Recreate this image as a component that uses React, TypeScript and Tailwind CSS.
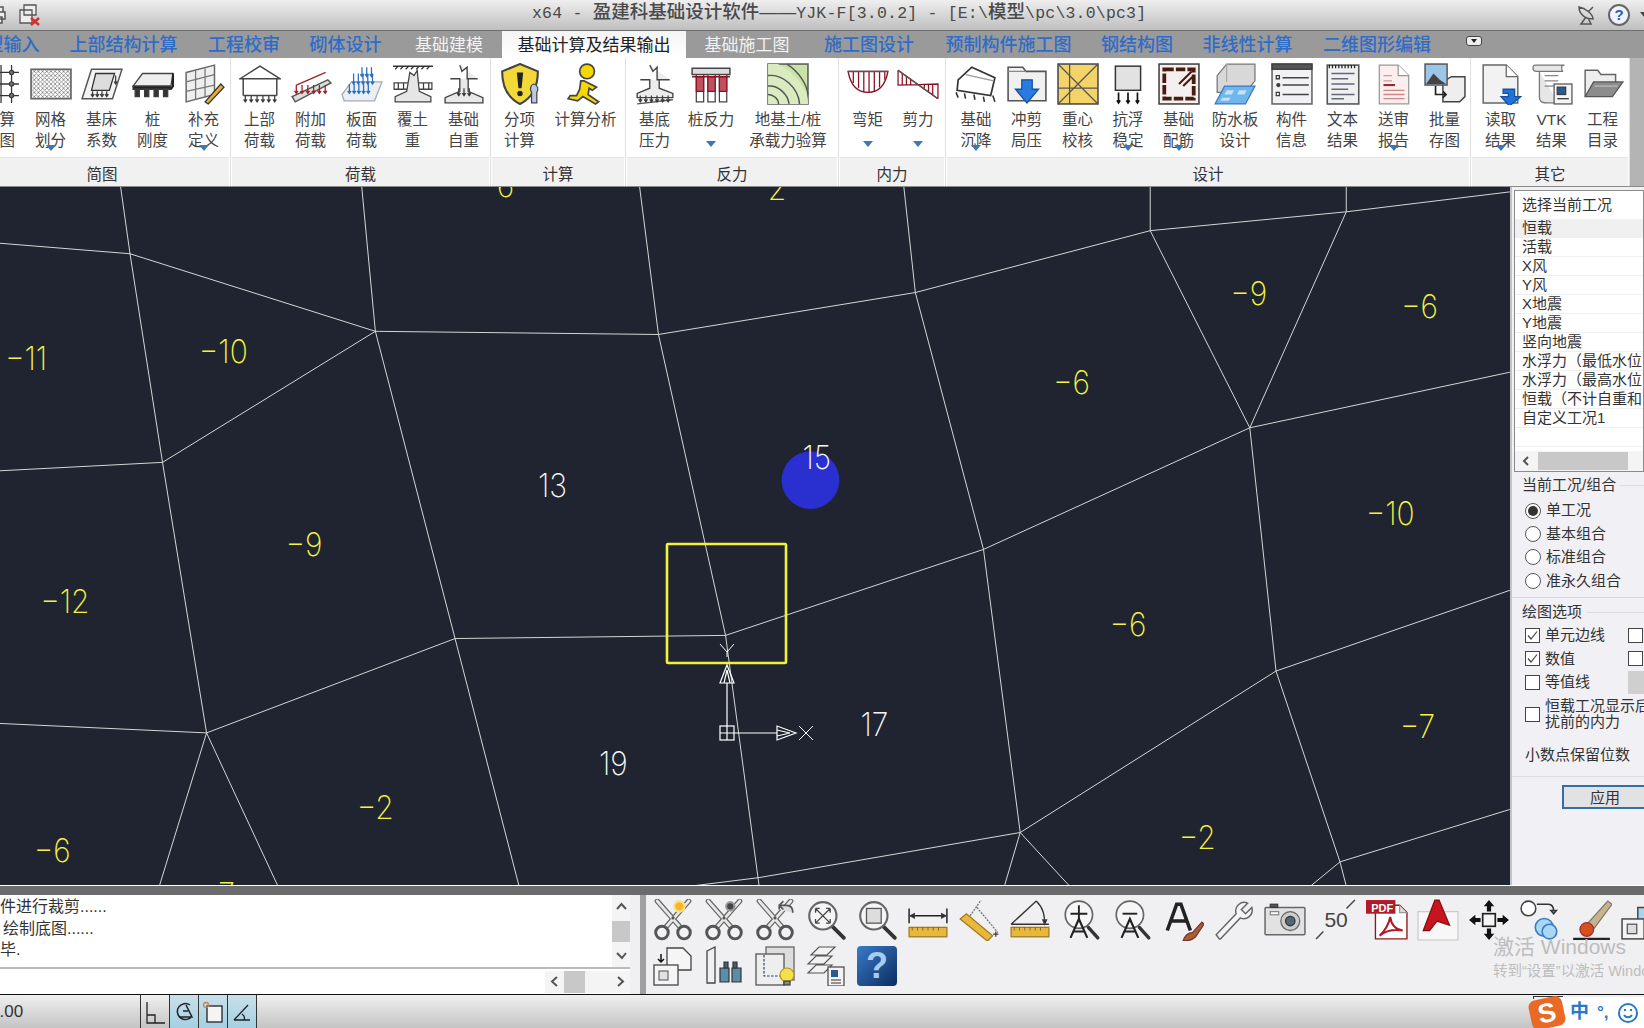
import type { ReactNode } from 'react';

const K = '#3c3c3c';

// small svg wrapper, all icons are drawn on a 40x40 grid
function Ic({ children, size = 42 }: { children: ReactNode; size?: number }) {
  return (
    <svg width={size} height={size} viewBox="0 0 40 40" fill="none" stroke={K} strokeWidth="1.2" className="shrink-0">
      {children}
    </svg>
  );
}

const Arrows = ({ x, y, n, gap = 6, h = 7 }: { x: number; y: number; n: number; gap?: number; h?: number }) => (
  <>
    {Array.from({ length: n }).map((_, i) => (
      <path key={i} d={`M${x + i * gap} ${y}v${h}m-1.6-2.4l1.6 2.4 1.6-2.4`} />
    ))}
  </>
);

const Scissors = ({ extra }: { extra?: ReactNode }) => (
  <>
    <path d="M5 2L27 27M35 2L13 27" stroke="#666" strokeWidth="5" strokeLinecap="round" />
    <path d="M5 2L27 27M35 2L13 27" stroke="#e8e8e8" strokeWidth="2.8" strokeLinecap="round" />
    <circle cx="9.500" cy="32" r="6" fill="#f2f2f2" stroke="#555" strokeWidth="2.800" />
    <circle cx="30.500" cy="32" r="6" fill="#f2f2f2" stroke="#555" strokeWidth="2.800" />
    <circle cx="20" cy="18" r="1.500" fill="#555" stroke="none" />
    {extra}
  </>
);

const Magnifier = ({ children }: { children?: ReactNode }) => (
  <>
    <path d="M26 26L37 37" stroke="#333" strokeWidth="3.6" strokeLinecap="round" />
    <circle cx="17" cy="16" r="13" fill="#f5f5f5" stroke="#666" strokeWidth="2" />
    {children}
  </>
);

const Ruler = ({ x = 2, y = 27, w = 36 }: { x?: number; y?: number; w?: number }) => (
  <>
    <rect x={x} y={y} width={w} height="9" fill="#e8b83c" stroke="#a07a20" />
    <path d={`M${x + 3} ${y}v3m5-3v3m5-3v3m5-3v3m5-3v3m5-3v3`} stroke="#7a5a10" strokeWidth=".8" />
  </>
);

const TextZoom = ({ minus }: { minus?: boolean }) => (
  <>
    <path d="M27 27L36 37" stroke="#333" strokeWidth="3.2" strokeLinecap="round" />
    <circle cx="18" cy="15" r="13" fill="#f6f6f6" stroke="#666" strokeWidth="1.6" />
    <path d={minus ? 'M11 14h14' : 'M10 14h16M18 6v14'} stroke="#222" strokeWidth="1.8" />
    <path d="M10 37L18 19l8 18M13 31h10" stroke="#222" strokeWidth="2" />
  </>
);

const ribbonIcons: Record<string, ReactNode> = {
  grid: (
    <>
      <path d="M0 9H38M0 20H38M0 31H38M21 2V38M31 2V38" stroke="#333" />
      <circle cx="31" cy="9" r="2" fill="#777" />
      <circle cx="31" cy="20" r="2" fill="#777" />
      <circle cx="31" cy="31" r="2" fill="#777" />
    </>
  ),
  mesh: (
    <>
      <defs>
        <pattern id="msh" width="4" height="4" patternUnits="userSpaceOnUse">
          <path d="M0 0L4 4M4 0L0 4" stroke="#777" strokeWidth=".7" />
        </pattern>
      </defs>
      <rect x="1" y="6" width="38" height="28" fill="url(#msh)" stroke="#666" strokeWidth="1.6" />
    </>
  ),
  bed: (
    <>
      <path d="M10 6H39L30 34H1Z" fill="#f4f4f4" stroke="#555" strokeWidth="1.4" />
      <path d="M14 10H32L27 26H10Z" fill="#ddd" stroke="#333" />
      <Arrows x={11} y={27} n={4} gap={4.5} h={5} />
      <path d="M33 12v8m-1.4-2.4l1.4 2.4 1.4-2.4" />
    </>
  ),
  pile: (
    <>
      <path d="M1 22L10 10H39L37 22Z" fill="#eee" stroke="#444" />
      <path d="M1 22H37V25H1Z" fill="#222" />
      <path d="M3 25h4v7H3zM12 25h4v7h-4zM21 25h4v7h-4zM30 25h4v7h-4z" fill="#333" />
      <path d="M39 10v12l-2 3" stroke="#222" strokeWidth="2" />
    </>
  ),
  extra: (
    <>
      <path d="M3 9L30 2V30L3 37Z" fill="#eee" stroke="#666" strokeWidth="1.4" />
      <path d="M12 7V35M21 5V33M3 18L30 11M3 27L30 21" stroke="#777" />
      <path d="M21 37L36 20L39 23L24 39Z" fill="#e8b030" stroke="#333" />
    </>
  ),
  upper: (
    <>
      <path d="M1 15L20 3L39 15H1Z" fill="#fff" stroke="#444" strokeWidth="1.4" />
      <path d="M4 15V31M36 15V31M4 31H36" stroke="#444" strokeWidth="1.4" />
      <Arrows x={6} y={31} n={6} gap={5.6} h={6} />
    </>
  ),
  addl: (
    <>
      <path d="M2 32L36 16L39 19L5 37Z" fill="#ddd" stroke="#555" strokeWidth="1.4" />
      <g stroke="#a02020">
        <Arrows x={6} y={21} n={6} gap={5.5} h={8} />
      </g>
      <path d="M6 21L34 9" stroke="#a02020" />
    </>
  ),
  slab: (
    <>
      <path d="M1 30L10 18H39L32 36H3Z" fill="#e9eff4" stroke="#aaa" />
      <g stroke="#2a6fc0">
        <Arrows x={8} y={20} n={5} gap={4.5} h={9} />
        <Arrows x={12} y={10} n={5} gap={4.5} h={10} />
        <Arrows x={20} y={4} n={3} gap={4.5} h={9} />
      </g>
    </>
  ),
  cover: (
    <>
      <path d="M1 3H39" stroke="#333" strokeWidth="1.4" />
      <path d="M3 6l3-3M8 6l3-3M13 6l3-3M18 6l3-3M23 6l3-3M28 6l3-3M33 6l3-3" stroke="#333" />
      <path d="M2 19H38V25H2Z" fill="#fff" stroke="#444" />
      <path d="M6 19v6M11 19v6M30 19v6M35 19v6" />
      <path d="M3 37V32L14 27L17 9L21 12L24 7L26 27L37 32V37Z" fill="#e6e6e6" stroke="#444" />
    </>
  ),
  self: (
    <>
      <path d="M16 2L18 8L23 4V15L33 15M7 15H16V27L2 33V38H38V33L24 27V15" fill="#e9e9e9" stroke="#444" strokeWidth="1.3" />
      <Arrows x={15} y={24} n={3} gap={5} h={7} />
    </>
  ),
  item: (
    <>
      <path d="M20 1L37 8C37 23 32 33 20 39C8 33 3 23 3 8Z" fill="#f3d83a" stroke="#444" strokeWidth="2" />
      <path d="M17 9h6l-1.5 15h-3z" fill="#222" stroke="none" />
      <circle cx="20" cy="29" r="2.6" fill="#222" stroke="none" />
      <path d="M33 20c4 1 5 5 3 8v10h-5V28c-2-3-1-7 2-8z" fill="#b9cbe0" stroke="#445" />
    </>
  ),
  run: (
    <>
      <circle cx="21" cy="8" r="7" fill="#f5d800" stroke="#444" strokeWidth="1.6" />
      <path d="M18 17L30 23L26 26L23 24L22 30L32 37L29 39L17 32L12 36L3 34L5 31L11 31L14 25L15 17Z" fill="#f5d800" stroke="#444" strokeWidth="1.6" />
    </>
  ),
  base: (
    <>
      <path d="M15 2L18 8L22 4V16H34M6 16H15V24L3 29V33H37V29L24 24V16" fill="#ececec" stroke="#444" strokeWidth="1.3" />
      <path d="M3 39L37 35" stroke="#555" />
      <Arrows x={6} y={31} n={6} gap={5.3} h={6} />
    </>
  ),
  pileForce: (
    <>
      <rect x="2" y="5" width="36" height="6" fill="#ddd" stroke="#444" strokeWidth="1.4" />
      <path d="M6 11h7v26H6zM17 11h7v26h-7zM28 11h7v26h-7z" fill="#fff" stroke="#444" />
      <path d="M6 13h7v14H6zM17 13h7v14h-7zM28 13h7v14h-7z" fill="#c05060" stroke="#901020" />
      <path d="M2 13H38" stroke="#901020" strokeWidth="1.4" />
    </>
  ),
  soil: (
    <>
      <rect x="1" y="1" width="38" height="38" fill="#c8e2a8" stroke="#666" strokeWidth="1.6" />
      <path d="M1 39H39V36C38 22 22 6 10 1H1Z" fill="#d8ecc0" stroke="none" />
      <path d="M1 12C15 10 30 24 31 39M1 22C11 21 20 30 21 39M1 30C6 30 11 34 11 39M19 1C30 8 38 20 39 30" stroke="#555" strokeWidth="1.4" />
    </>
  ),
  moment: (
    <>
      <path d="M1 8H39C36 24 28 28 20 28C12 28 4 24 1 8Z" fill="#fff" stroke="#8a1020" strokeWidth="1.3" />
      <path d="M6 8V19M11 8V24M16 8V27M21 8V28M26 8V27M31 8V23M36 8V16" stroke="#8a1020" />
      <path d="M1 8H39" stroke="#555" strokeWidth="1.4" />
    </>
  ),
  shear: (
    <>
      <path d="M1 7L39 34M1 7V21L20 20.5L39 20V34" fill="none" stroke="#8a1020" strokeWidth="1.2" />
      <path d="M5 10V21M9 13V21M13 16V21M26 20V25M30 20V28M34 20V31" stroke="#8a1020" />
      <path d="M1 7L39 34" stroke="#555" strokeWidth="1.3" />
    </>
  ),
  settle: (
    <>
      <path d="M3 16L16 4L38 14L34 31L2 26Z" fill="#fff" stroke="#333" strokeWidth="1.6" />
      <path d="M10 11L37 17" stroke="#999" strokeWidth="1.3" />
      <path d="M1 28L3 33M9 29L10 34M18 30L19 35M27 32L28 37M36 31L38 37" stroke="#333" strokeWidth="1.5" />
    </>
  ),
  punch: (
    <>
      <path d="M2 4H16L19 8H38V36H2Z" fill="#f0f0f0" stroke="#555" strokeWidth="1.5" />
      <path d="M2 8H19" stroke="#888" />
      <path d="M15 16H25V25H31L20 38L9 25H15Z" fill="#2a7ae0" stroke="#1550a0" />
    </>
  ),
  gravity: (
    <>
      <rect x="1" y="1" width="38" height="38" fill="#f4d468" stroke="#555" strokeWidth="1.6" />
      <path d="M1 1L39 39M39 1L1 39M12 1V39M1 24H39" stroke="#555" strokeWidth="1.2" />
    </>
  ),
  buoy: (
    <>
      <rect x="8" y="3" width="24" height="23" fill="#e2e2e2" stroke="#333" strokeWidth="1.4" />
      <g stroke="#111" strokeWidth="1.6">
        <Arrows x={11} y={28} n={3} gap={9} h={10} />
      </g>
    </>
  ),
  rebar: (
    <>
      <rect x="1" y="1" width="38" height="38" fill="#f4f0f0" stroke="#444" strokeWidth="1.5" />
      <path d="M6 6H34V34H6Z" stroke="#4a1c10" strokeWidth="3.600" strokeDasharray="9 2" />
      <path d="M20 20L32 8M24 22L33 13" stroke="#4a1c10" strokeWidth="2" />
    </>
  ),
  waterproof: (
    <>
      <path d="M3 28V12L12 1H39V17L30 28Z" fill="#d8d8d8" stroke="#777" />
      <path d="M12 1V18" stroke="#aaa" />
      <path d="M1 39L10 22H39L30 39Z" fill="#6fb6ec" stroke="#3a7ac0" />
      <path d="M10 30h7l2-4h-7zM22 30h7l2-4h-7zM6 36h8l2-3H8z" fill="#c4e2f8" stroke="none" />
    </>
  ),
  info: (
    <>
      <rect x="1" y="1" width="38" height="38" fill="#f2f2f4" stroke="#666" strokeWidth="1.5" />
      <rect x="1" y="1" width="38" height="5" fill="#555" />
      <path d="M5 12h3v3H5zM5 28h3v3H5z" fill="#fff" />
      <path d="M11 14H36M11 21H36M11 30H36" stroke="#444" strokeWidth="1.4" />
      <circle cx="7" cy="21" r="1.4" fill="#333" />
    </>
  ),
  text: (
    <>
      <rect x="5" y="2" width="30" height="37" fill="#eef0f2" stroke="#555" strokeWidth="1.5" />
      <path d="M7 2V5M10 2V5M13 2V5M16 2V5M19 2V5M22 2V5M25 2V5M28 2V5M31 2V5" stroke="#222" strokeWidth="1.2" />
      <path d="M9 10H31M9 15H25M9 20H31M9 25H25M9 30H31M9 34H21" stroke="#667" strokeWidth="1.3" />
    </>
  ),
  report: (
    <>
      <path d="M6 2H24L34 12V39H6Z" fill="#fbeeee" stroke="#999" />
      <path d="M24 2V12H34" fill="#fff" stroke="#999" />
      <path d="M10 12H18M10 17H18" stroke="#c99" />
      <path d="M10 21H21" stroke="#8a3030" strokeWidth="2" />
      <path d="M10 26H30M10 30H30M10 34H30" stroke="#c88" />
    </>
  ),
  batch: (
    <>
      <path d="M18 18L26 13H39V32L34 37H18Z" fill="#eee" stroke="#444" strokeWidth="1.4" />
      <rect x="1" y="1" width="21" height="20" fill="#9cc6e6" stroke="#555" strokeWidth="1.4" />
      <path d="M2 20L9 10L15 16L21 20Z" fill="#444" stroke="none" />
      <path d="M11 22V30H21m-3-3l3 3-3 3" stroke="#222" strokeWidth="1.6" />
    </>
  ),
  read: (
    <>
      <path d="M3 2H25L36 13V38H3Z" fill="#f2f2f2" stroke="#666" strokeWidth="1.4" />
      <path d="M25 2V13H36" fill="#fff" stroke="#666" />
      <path d="M22 25H33V32H39L28 41L20 32H27V29H22Z" fill="#1f72d8" stroke="#1550a0" />
    </>
  ),
  vtk: (
    <>
      <path d="M4 2C1 2 1 8 5 8H30C28 2 30 2 32 2ZM8 8V32C8 38 12 38 16 38H26" fill="#e6e6e6" stroke="#777" />
      <path d="M13 12H26M13 17H26M13 22H22" stroke="#888" />
      <rect x="22" y="20" width="17" height="19" fill="#f5f5f5" stroke="#555" />
      <rect x="25" y="23" width="8" height="7" fill="#2a5a90" />
      <path d="M25 34H36" stroke="#333" />
    </>
  ),
  folder: (
    <>
      <path d="M3 32V7H15L18 11H32V18" fill="#eee" stroke="#666" strokeWidth="1.4" />
      <path d="M3 32L11 18H39L29 32Z" fill="#8c8c8c" stroke="#555" />
      <path d="M12 22H34" stroke="#bbb" />
    </>
  ),
};

const toolIcons: ReactNode[] = [
  <Scissors extra={<circle cx="26" cy="7" r="5" fill="#f8b820" stroke="#fbe090" strokeWidth="2" />} />,
  <Scissors extra={<circle cx="26" cy="7" r="4" fill="#444" stroke="#999" strokeWidth="2" />} />,
  <Scissors extra={<path d="M24 10V6H31C35 6 37 9 37 13M24 6L28 2M24 6L28 10" stroke="#555" strokeWidth="1.6" fill="#ddd" />} />,
  <Magnifier>
    <path d="M10 9L24 23M24 9L10 23M10 9h4M10 9v4M24 9h-4M24 9v4M10 23h4M10 23v-4M24 23h-4M24 23v-4" stroke="#444" />
  </Magnifier>,
  <Magnifier>
    <rect x="10" y="9" width="14" height="14" fill="#ddd" stroke="#555" />
  </Magnifier>,
  <>
    <path d="M2 9V23M38 9V23M3 16H37" stroke="#222" strokeWidth="1.4" />
    <path d="M3 16l4-2v4zM37 16l-4-2v4z" fill="#222" />
    <Ruler />
  </>,
  <>
    <path d="M8 21L22 1M18 8L38 32" stroke="#777" strokeDasharray="2 1" />
    <path d="M2 19L8 14L33 35L28 40Z" fill="#e8b83c" stroke="#a07a20" />
    <path d="M36 31v5m-2.500-2.500h5" />
  </>,
  <>
    <path d="M2 24L26 2M2 24H38M26 2C33 9 34 16 34 24" stroke="#333" strokeWidth="1.3" />
    <path d="M34 24l-1.800-4h3.600z" fill="#222" />
    <Ruler y={27} />
  </>,
  <TextZoom />,
  <TextZoom minus />,
  <>
    <path d="M5 30L14 5H18L27 30M9 21H23" stroke="#222" strokeWidth="3.400" />
    <path d="M20 40C22 34 26 32 29 32L38 22L40 24L32 36C28 40 24 40 20 40Z" fill="#a86030" stroke="#733" />
  </>,
  <path d="M6 38L3 34L22 14C20 7 27 1 33 4L27 10L31 14L37 8C39 15 32 21 26 18L7 38Z" fill="#f4f4f4" stroke="#666" strokeWidth="1.4" />,
  <>
    <rect x="1" y="8" width="38" height="26" rx="1" fill="#e2e2e2" stroke="#666" strokeWidth="1.4" />
    <rect x="6" y="5" width="7" height="3" fill="#555" />
    <circle cx="25" cy="21" r="9" fill="#ccc" stroke="#666" />
    <circle cx="25" cy="21" r="4.500" fill="#567" stroke="#333" />
    <rect x="6" y="12" width="8" height="3" fill="#fff" stroke="#888" />
  </>,
  <>
    <path d="M1 38L8 31M30 9L38 1" stroke="#444" strokeWidth="1.4" />
    <text x="9" y="27" fontSize="20" fontFamily="Liberation Sans, sans-serif" fill="#444" stroke="none">50</text>
  </>,
  <>
    <path d="M9 6H32L39 13V38H9Z" fill="#fff" stroke="#8a1a1a" strokeWidth="1.3" />
    <path d="M32 6V13H39" fill="#ddd" stroke="#999" />
    <rect x="0" y="1" width="28" height="13" fill="#b01a2a" stroke="none" />
    <text x="5" y="12" fontSize="10.500" fontWeight="700" fontFamily="Liberation Sans, sans-serif" fill="#fff" stroke="none">PDF</text>
    <path d="M13 35C18 30 22 24 23 17C24 24 28 29 35 30C28 29 19 30 13 35Z" stroke="#b01a2a" strokeWidth="2" />
  </>,
  <>
    <rect x="1" y="12" width="38" height="27" fill="#f7f7f7" stroke="#ccc" />
    <path d="M6 30L17 1H21L31 25L19 21L12 30Z" fill="#c8141c" stroke="#8a0c10" />
  </>,
  <>
    <rect x="14" y="14" width="12" height="12" fill="#f4f4f4" stroke="#222" strokeWidth="1.600" />
    <path d="M20 1L25 7H22V12H18V7H15ZM20 39L25 33H22V28H18V33H15ZM1 20L7 15V18H12V22H7V25ZM39 20L33 15V18H28V22H33V25Z" fill="#111" stroke="none" />
  </>,
  <>
    <circle cx="9" cy="9" r="7" fill="#fff" stroke="#444" strokeWidth="1.500" />
    <path d="M17 5H28C32 5 33 8 33 12M33 14l-2.500-3h5z" stroke="#333" strokeWidth="1.500" />
    <circle cx="24" cy="27" r="8.500" fill="#a8d8f4" stroke="#3a7ac0" strokeWidth="1.500" />
    <circle cx="29" cy="31" r="7" fill="#a8d8f4" stroke="#3a7ac0" strokeWidth="1.500" />
  </>,
  <>
    <path d="M17 23L36 2L40 5L23 28Z" fill="#c8b488" stroke="#777" />
    <circle cx="16" cy="29" r="6.500" fill="#d8501c" stroke="#933" />
    <path d="M3 38H38" stroke="#222" strokeWidth="2" />
  </>,
  <>
    <path d="M16 8H27L33 14V24H16Z" fill="#a8d4f0" stroke="#444" strokeWidth="1.400" />
    <rect x="1" y="19" width="21" height="19" fill="#f4f4f4" stroke="#444" strokeWidth="1.400" />
    <rect x="6" y="24" width="9" height="9" fill="#ddd" stroke="#555" />
  </>,
];

const toolIcons2: ReactNode[] = [
  <>
    <path d="M14 2H30L38 10V24H14Z" fill="#f5f5f5" stroke="#444" strokeWidth="1.300" />
    <rect x="1" y="19" width="24" height="20" fill="#f5f5f5" stroke="#444" strokeWidth="1.300" />
    <rect x="6" y="25" width="9" height="9" fill="#e0e0e0" stroke="#666" />
    <path d="M8 8V16m-3-3l3 3 3-3" stroke="#111" strokeWidth="1.500" />
  </>,
  <>
    <path d="M3 5L11 1V37H3Z" fill="#f0f0f0" stroke="#444" strokeWidth="1.300" />
    <path d="M16 22h9v14h-9zM28 22h9v14h-9z" fill="#5a8ea8" stroke="#333" />
    <path d="M20 16h4v6h-4zM29 16h4v6h-4z" fill="#3a6478" stroke="#333" />
  </>,
  <>
    <rect x="11" y="1" width="28" height="33" fill="#ddd" stroke="#666" strokeWidth="1.300" />
    <rect x="1" y="8" width="28" height="31" fill="#eee" stroke="#555" strokeWidth="1.300" />
    <path d="M9 9V30H29" stroke="#24408a" strokeWidth="1.200" strokeDasharray="2.500 1.500" />
    <circle cx="32" cy="29" r="7" fill="#f5e04a" stroke="#b09820" />
    <rect x="29" y="35" width="6" height="4" fill="#888" />
  </>,
  <>
    <path d="M5 9L13 1H29L21 9ZM2 18L10 10H26L18 18ZM2 27L10 19H26L18 27Z" fill="#f2f2f2" stroke="#555" />
    <rect x="22" y="21" width="16" height="19" fill="#f2f2f2" stroke="#444" strokeWidth="1.200" />
    <rect x="25" y="24" width="7" height="7" fill="#2a5a90" stroke="none" />
    <path d="M25 34H35M25 37H35" stroke="#333" />
  </>,
  <>
    <defs>
      <linearGradient id="hlp" x1="0" y1="0" x2="1" y2="1">
        <stop offset="0" stopColor="#3a7ac8" />
        <stop offset="1" stopColor="#0c2c60" />
      </linearGradient>
    </defs>
    <rect x="0" y="0" width="40" height="40" rx="4" fill="url(#hlp)" stroke="none" />
    <text x="20" y="32" textAnchor="middle" fontSize="36" fontWeight="700" fontFamily="Liberation Sans, sans-serif" fill="#a8ccf0" stroke="none">?</text>
  </>,
];

const tabs = [
  { t: '模型输入', w: 101, c: 'b' },
  { t: '上部结构计算', w: 139, c: 'b' },
  { t: '工程校审', w: 102, c: 'b' },
  { t: '砌体设计', w: 101, c: 'b' },
  { t: '基础建模', w: 106, c: 'w' },
  { t: '基础计算及结果输出', w: 184, c: 'a' },
  { t: '基础施工图', w: 122, c: 'w' },
  { t: '施工图设计', w: 122, c: 'b' },
  { t: '预制构件施工图', w: 157, c: 'b' },
  { t: '钢结构图', w: 100, c: 'b' },
  { t: '非线性计算', w: 121, c: 'b' },
  { t: '二维图形编辑', w: 138, c: 'b' },
];

type Item = { l: [string, string]; i: string; w?: number; arrow?: boolean };
const groups: { label: string; w: number; pl: number; items: Item[] }[] = [
  {
    label: '简图', w: 231, pl: 0,
    items: [
      { l: ['计算', '简图'], i: 'grid' },
      { l: ['网格', '划分'], i: 'mesh', arrow: true },
      { l: ['基床', '系数'], i: 'bed' },
      { l: ['桩', '刚度'], i: 'pile' },
      { l: ['补充', '定义'], i: 'extra', arrow: true },
    ],
  },
  {
    label: '荷载', w: 260, pl: 3,
    items: [
      { l: ['上部', '荷载'], i: 'upper' },
      { l: ['附加', '荷载'], i: 'addl' },
      { l: ['板面', '荷载'], i: 'slab' },
      { l: ['覆土', '重'], i: 'cover' },
      { l: ['基础', '自重'], i: 'self' },
    ],
  },
  {
    label: '计算', w: 135, pl: 3,
    items: [
      { l: ['分项', '计算'], i: 'item' },
      { l: ['计算分析', ''], i: 'run', w: 81 },
    ],
  },
  {
    label: '反力', w: 213, pl: 3,
    items: [
      { l: ['基底', '压力'], i: 'base' },
      { l: ['桩反力', ''], i: 'pileForce', w: 62, arrow: true },
      { l: ['地基土/桩', '承载力验算'], i: 'soil', w: 92 },
    ],
  },
  {
    label: '内力', w: 107, pl: 3,
    items: [
      { l: ['弯矩', ''], i: 'moment', arrow: true },
      { l: ['剪力', ''], i: 'shear', w: 50, arrow: true },
    ],
  },
  {
    label: '设计', w: 525, pl: 5,
    items: [
      { l: ['基础', '沉降'], i: 'settle', w: 50, arrow: true },
      { l: ['冲剪', '局压'], i: 'punch', w: 51 },
      { l: ['重心', '校核'], i: 'gravity', w: 51 },
      { l: ['抗浮', '稳定'], i: 'buoy', w: 50, arrow: true },
      { l: ['基础', '配筋'], i: 'rebar', w: 51, arrow: true },
      { l: ['防水板', '设计'], i: 'waterproof', w: 62 },
      { l: ['构件', '信息'], i: 'info', w: 51 },
      { l: ['文本', '结果'], i: 'text', w: 51 },
      { l: ['送审', '报告'], i: 'report', w: 51, arrow: true },
      { l: ['批量', '存图'], i: 'batch', w: 51 },
    ],
  },
  {
    label: '其它', w: 159, pl: 4,
    items: [
      { l: ['读取', '结果'], i: 'read', arrow: true },
      { l: ['VTK', '结果'], i: 'vtk' },
      { l: ['工程', '目录'], i: 'folder' },
    ],
  },
];

// wall lines of the plate mesh, in 1568-wide coordinates
const segs = [
  '115 178 124 242 155 441 197 699 152 845',
  '0 232 124 242 358 316 628 319 873 279 1097 220 1284 202 1440 183',
  '0 449 155 441 358 316',
  '0 690 197 699 265 845',
  '197 699 434 609 692 606 938 524 1192 408 1440 355',
  '345 178 358 316 434 609 495 845',
  '610 178 628 319 692 606 724 845',
  '862 178 873 279 938 524 973 794 1020 845',
  '1097 178 1097 220 1192 408 1284 202 1284 178',
  '1192 408 1217 640 1278 822 1284 845',
  '1440 563 1217 640 973 794 724 837 660 845',
  '973 794 958 845',
  '1440 772 1278 822 1250 845',
];

const yellow: [string, number, number][] = [
  ['−11', 25, 341], ['−10', 213, 334], ['−9', 290, 518], ['−12', 62, 573], ['−2', 358, 769], ['−6', 50, 810],
  ['−6', 1022, 364], ['−9', 1191, 279], ['−6', 1354, 291], ['−10', 1326, 489], ['−6', 1076, 595], ['−7', 1352, 692],
  ['−2', 1142, 798], ['6', 482, 176], ['2', 741, 179], ['7', 216, 852],
];
const white: [string, number, number][] = [['13', 527, 462], ['15', 779, 435], ['17', 834, 690], ['19', 585, 727]];

function Canvas() {
  const num = ([t, x, y]: [string, number, number], fill: string) => (
    <text
      key={t + x}
      transform={`translate(${x} ${y + 12}) scale(0.92 1)`}
      textAnchor="middle"
      fontSize="31"
      fontWeight="200"
      fontFamily="Inter, sans-serif"
      fill={fill}
    >
      {t}
    </text>
  );
  return (
    <div className="relative flex-1 bg-[#1f2430] overflow-hidden">
      <svg viewBox="0 187 1510 698" className="w-[1510px] h-[698px] block">
        <g transform="scale(1.0485)">
          {segs.map((s, i) => (
            <polyline key={i} points={s} fill="none" stroke="#e0e0e0" strokeWidth=".9" />
          ))}
          <circle cx="773" cy="458" r="27.500" fill="#2a2fd0" />
          {yellow.map(n => num(n, '#f4f440'))}
          {white.map(n => num(n, '#f6f6f6'))}
        </g>
        <rect x="667" y="544" width="119" height="119" fill="none" stroke="#f2f23c" strokeWidth="2.600" rx="1" />
        <g stroke="#fff" strokeWidth="1.200" fill="none">
          <rect x="720" y="726" width="14" height="14" />
          <path d="M727 726V740M720 733H734M734 733H777M727 726V683" />
          <path d="M727 665L720 683H734ZM727 670L724 683M727 670L730 683" />
          <path d="M796 733L777 726V740ZM790 733L777 730M790 733L777 736" />
          <path d="M799 726L813 740M813 726L799 740" strokeWidth="1" />
          <path d="M720 644L727 652L734 644M727 652V657" strokeWidth="1" />
        </g>
      </svg>
    </div>
  );
}

function Box({ checked }: { checked?: boolean }) {
  return (
    <span className="w-[15px] h-[15px] border border-[#444] bg-white flex items-center justify-center shrink-0">
      {checked && (
        <svg width="13" height="13" viewBox="0 0 13 13" fill="none" stroke="#444" strokeWidth="1.200">
          <path d="M2 6.500L5 10L11 2.500" />
        </svg>
      )}
    </span>
  );
}

function Radio({ on, text }: { on?: boolean; text: string }) {
  return (
    <div className="h-[23.400px] flex items-center gap-[5px] pl-[13px]">
      <span className="w-[16px] h-[16px] rounded-full border border-[#555] bg-white flex items-center justify-center shrink-0">
        {on && <span className="w-[10px] h-[10px] rounded-full bg-[#333]" />}
      </span>
      <span>{text}</span>
    </div>
  );
}

const listRows = ['恒载', '活载', 'X风', 'Y风', 'X地震', 'Y地震', '竖向地震', '水浮力（最低水位', '水浮力（最高水位', '恒载（不计自重和', '自定义工况1', ''];

function SidePanel() {
  return (
    <aside className="w-[134px] shrink-0 bg-[#f0f0f5] border-l-2 border-[#c4c4c4] pt-[3px] flex flex-col overflow-hidden text-[15px] text-[#333] whitespace-nowrap">
      <div className="ml-[2px] h-[282px] border border-[#8a8a8a] bg-white flex flex-col overflow-hidden">
        <div className="h-[28px] flex items-center pl-[7px]">选择当前工况</div>
        {listRows.map((r, i) => (
          <div key={i} className={`h-[19px] leading-[18px] pl-[7px] border-b border-[#efefef] shrink-0 ${i === 0 ? 'bg-[#f0f0f0]' : ''}`}>
            {r}
          </div>
        ))}
        <div className="mt-auto h-[20px] flex items-center bg-[#f4f4f4]">
          <span className="w-[23px] pl-[6px] text-[12px] font-bold text-[#555]">
            <svg width="10" height="10" viewBox="0 0 10 10" fill="none" stroke="#555" strokeWidth="2"><path d="M7 1L3 5L7 9" /></svg>
          </span>
          <span className="w-[90px] h-[18px] bg-[#c8c8c8]" />
        </div>
      </div>

      <div className="h-[26px] flex items-center gap-[4px] pl-[10px]">
        <span>当前工况/组合</span>
        <span className="flex-1 h-px bg-[#ddd]" />
      </div>
      <div className="pt-[1px]">
        <Radio on text="单工况" />
        <Radio text="基本组合" />
        <Radio text="标准组合" />
        <Radio text="准永久组合" />
      </div>
      <div className="h-px bg-[#d8d8d8] mt-[4px]" />

      <div className="h-[26px] flex items-center gap-[4px] pl-[10px] pt-[3px]">
        <span>绘图选项</span>
        <span className="flex-1 h-px bg-[#ddd]" />
      </div>
      <div className="h-[23.500px] flex items-center pl-[13px]">
        <div className="w-[103px] flex items-center gap-[5px] shrink-0"><Box checked />单元边线</div>
        <Box />
      </div>
      <div className="h-[23.500px] flex items-center pl-[13px]">
        <div className="w-[103px] flex items-center gap-[5px] shrink-0"><Box checked />数值</div>
        <Box />
      </div>
      <div className="h-[23.500px] flex items-center pl-[13px]">
        <div className="w-[103px] flex items-center gap-[5px] shrink-0"><Box />等值线</div>
        <span className="w-[40px] h-[23px] bg-[#cfcfcf] shrink-0" />
      </div>
      <div className="mt-[2px] h-[36px] flex items-center gap-[5px] pl-[13px]">
        <Box />
        <div className="leading-[16px]">恒载工况显示后<br />扰前的内力</div>
      </div>
      <div className="mt-[11px] h-[24px] flex items-center pl-[13px]">小数点保留位数</div>
      <div className="h-px bg-[#dcdcdc] mt-[9px]" />
      <button className="mt-[8px] ml-[50px] w-[118px] h-[24px] shrink-0 border-2 border-[#2f70a8] bg-[#e2e2e4] text-[15px] text-[#333]">
        <span className="block w-[80px] mx-auto -translate-x-[16px]">应用</span>
      </button>
    </aside>
  );
}

function Ribbon() {
  return (
    <div className="h-[128px] bg-white flex overflow-hidden">
      <div className="flex -ml-[26px]">
        {groups.map((g, gi) => (
          <section
            key={g.label}
            className="h-full flex flex-col border-r border-[#e0e0e0] shrink-0"
            style={{ width: gi === 0 ? g.w + 26 : g.w }}
          >
            <div className="flex h-[104px]" style={{ paddingLeft: g.pl }}>
              {g.items.map(it => (
                <div key={it.l.join('') + it.i} className="relative flex flex-col items-center shrink-0 pt-[4px]" style={{ width: it.w ?? 51 }}>
                  <div className="h-[44px] flex items-center justify-center">
                    <Ic>{ribbonIcons[it.i]}</Ic>
                  </div>
                  <div className="mt-[3px] text-[15.500px] leading-[21px] text-[#444] text-center whitespace-nowrap">
                    {it.l[0]}
                    <br />
                    {it.l[1]}
                  </div>
                  {it.arrow && (
                    <span className={`absolute left-1/2 -translate-x-1/2 w-0 h-0 border-l-[5px] border-r-[5px] border-t-[6px] border-l-transparent border-r-transparent border-t-[#3a78b8] ${it.l[1] ? 'top-[87px]' : 'top-[83px]'}`} />
                  )}
                </div>
              ))}
            </div>
            <div className="flex-1 mx-[1px] pt-[5px] bg-[#f1f1f1] border-t border-[#e4e4e4] flex items-center justify-center text-[15.500px] text-[#333]">
              {g.label}
            </div>
          </section>
        ))}
      </div>
      <div className="flex-1 bg-[#b4b4b4]" />
    </div>
  );
}

export default function App() {
  return (
    <div className="w-[1644px] h-[1028px] flex flex-col overflow-hidden bg-[#6b6b6b] font-['Liberation_Sans','Noto_Sans_CJK_SC',sans-serif]">
      {/* title bar */}
      <header className="h-[31px] shrink-0 flex items-center border-b border-[#6e6e6e] bg-gradient-to-b from-[#efefef] to-[#bfbfbf] text-[#4a4a4a]">
        <div className="-ml-[12px] flex items-center gap-[10px]">
          <svg width="20" height="20" viewBox="0 0 20 20" fill="#eee" stroke="#555" strokeWidth="1.500">
            <path d="M5 7V2H15V7M3 7H17V14H3ZM6 12H14V18H6Z" />
          </svg>
          <svg width="22" height="24" viewBox="0 0 22 24" fill="#eee" stroke="#555" strokeWidth="1.300">
            <path d="M6 2H18V12H6ZM2 7H14V20H2Z" />
            <path d="M13 15L21 22M21 15L13 22" stroke="#d03030" strokeWidth="2.500" />
          </svg>
        </div>
        <div className="ml-[492px] mb-[4px] flex items-baseline text-[18.500px] font-medium whitespace-nowrap leading-none">
          <span className="font-['Liberation_Mono'] text-[16.500px] tracking-[0.200px] whitespace-pre">x64 - </span>
          <span>盈建科基础设计软件——</span>
          <span className="font-['Liberation_Mono'] text-[16.500px] tracking-[0.200px] whitespace-pre">YJK-F[3.0.2] - [E:\</span>
          <span>模型</span>
          <span className="font-['Liberation_Mono'] text-[16.500px] tracking-[0.200px]">\pc\3.0\pc3]</span>
        </div>
        <div className="ml-auto -mr-[8px] flex items-center gap-[10px]">
          <svg width="22" height="22" viewBox="0 0 22 22" fill="none" stroke="#555" strokeWidth="1.500">
            <path d="M3 3C3 10 9 15 17 15C17 10 9 4 3 3ZM10 13L5 20H15L12 14M12 8L17 3" />
          </svg>
          <span className="w-[22px] h-[22px] rounded-full border-2 border-[#666] bg-[#f0f4fa] text-[#2a60b0] text-[15px] font-bold flex items-center justify-center">?</span>
          <svg width="12" height="12" viewBox="0 0 12 12" fill="#444"><path d="M0 3H8L4 8Z" /></svg>
        </div>
      </header>

      {/* tabs */}
      <nav className="h-[27px] shrink-0 bg-[#9a9a9a] flex items-stretch overflow-hidden">
        <div className="flex -ml-[47px] shrink-0">
          {tabs.map(t => (
            <div
              key={t.t}
              className={`leading-[29px] text-center shrink-0 whitespace-nowrap ${
                t.c === 'a' ? 'bg-gradient-to-b from-[#f4f4f4] to-white text-[#222] text-[17px]' : t.c === 'w' ? 'text-[#f2f2f2] text-[17px]' : 'text-[#2f6cc8] font-medium text-[18px]'
              }`}
              style={{ width: t.w }}
            >
              {t.t}
            </div>
          ))}
        </div>
        <span className="ml-[20px] mt-[5px] w-[16px] h-[10px] rounded-[3px] bg-[#eee] border border-[#444] flex items-center justify-center">
          <span className="w-0 h-0 border-l-[3px] border-r-[3px] border-t-[4px] border-l-transparent border-r-transparent border-t-[#222]" />
        </span>
      </nav>

      <Ribbon />
      <div className="h-px bg-[#8a8a8a] shrink-0" />

      {/* drawing area + side panel */}
      <main className="h-[698px] shrink-0 flex">
        <Canvas />
        <SidePanel />
      </main>

      <div className="h-px bg-white shrink-0" />
      <div className="h-[9px] bg-[#6b6b6b] shrink-0" />

      {/* command log + toolbars */}
      <div className="relative h-[99px] shrink-0 flex bg-[#f0f0f2]">
        <div className="w-[630px] shrink-0 flex flex-col bg-white">
          <div className="h-[74px] flex border-b-2 border-[#bbb]">
            <div className="flex-1 overflow-hidden pt-[1px] text-[16px] leading-[21.500px] text-[#333] whitespace-nowrap">
              <div className="-ml-[16px]">构件进行裁剪......</div>
              <div className="pl-[3px]">绘制底图......</div>
              <div className="-ml-[16px]">完毕.</div>
            </div>
            <div className="w-[18px] bg-[#f4f4f4] flex flex-col items-center justify-between py-[7px] relative">
              <svg width="11" height="8" viewBox="0 0 11 8" fill="none" stroke="#555" strokeWidth="2"><path d="M1 7L5.500 2L10 7" /></svg>
              <span className="w-[18px] h-[21px] bg-[#c8c8c8]" />
              <svg width="11" height="8" viewBox="0 0 11 8" fill="none" stroke="#555" strokeWidth="2"><path d="M1 1L6 6L10 1" /></svg>
            </div>
          </div>
          <div className="flex-1 flex justify-end items-center">
            <div className="w-[85px] h-[22px] bg-[#f4f4f4] flex items-center px-[5px]">
              <svg width="8" height="11" viewBox="0 0 8 11" fill="none" stroke="#555" strokeWidth="2"><path d="M7 1L2 5.500L7 10" /></svg>
              <span className="w-[21px] h-[22px] bg-[#c8c8c8] ml-[6px]" />
              <svg className="ml-auto" width="8" height="11" viewBox="0 0 8 11" fill="none" stroke="#555" strokeWidth="2"><path d="M1 1L6 5.500L1 10" /></svg>
            </div>
          </div>
        </div>
        <div className="w-[10px] shrink-0" />
        <div className="w-[6px] shrink-0 bg-[#a0a0a0]" />
        <div className="flex-1 flex flex-col overflow-hidden pl-[1px]">
          <div className="flex h-[49px] items-center w-[1100px] shrink-0">
            {toolIcons.map((ic, i) => (
              <div key={i} className="w-[51px] shrink-0 flex justify-center"><Ic size={42}>{ic}</Ic></div>
            ))}
          </div>
          <div className="flex h-[44px] items-center">
            {toolIcons2.map((ic, i) => (
              <div key={i} className="w-[51px] shrink-0 flex justify-center"><Ic size={40}>{ic}</Ic></div>
            ))}
          </div>
        </div>
        {/* windows activation watermark */}
        <div className="absolute left-[1493px] top-[39px] text-[#bdbdbd] whitespace-nowrap pointer-events-none">
          <div className="text-[21px] leading-[26px]">激活 Windows</div>
          <div className="text-[14.500px] leading-[20px] mt-[1px]">转到“设置”以激活 Windows。</div>
        </div>
      </div>
      <div className="h-px bg-[#111] shrink-0" />

      {/* status bar */}
      <footer className="h-[33px] shrink-0 flex items-stretch bg-gradient-to-b from-[#f0f0f0] to-[#c4c4c4] text-[#333]">
        <span className="-ml-[10px] w-[150px] flex items-center text-[17px]">0.00</span>
        <div className="flex border-l border-[#333]">
          {[0, 1, 2, 3].map(i => (
            <span key={i} className={`w-[29px] border-r border-[#333] flex items-center justify-center ${i ? 'bg-gradient-to-b from-[#c8e0ea] to-[#a4d0e2]' : ''}`}>
              <svg width="24" height="26" viewBox="0 0 24 26" fill="none" stroke="#222" strokeWidth="1.300">
                {i === 0 && <path d="M4 3V24H22M4 16H12V24" />}
                {i === 1 && <path d="M18 6A8 8 0 1 0 20 17M8 18H20L14 6M11 12H16" strokeWidth="1.500" />}
                {i === 2 && <><rect x="6" y="7" width="15" height="16" fill="#f4f4f4" /><circle cx="5" cy="6" r="2.500" stroke="#d08060" /></>}
                {i === 3 && <path d="M4 21H20M4 21L18 6M12 15A5 5 0 0 1 14 21" />}
              </svg>
            </span>
          ))}
        </div>
        <div className="ml-auto relative w-[110px] self-end h-[31px] flex items-center">
          <span className="absolute left-[-1px] -top-[1px] w-[30px] h-[3px] border-t border-x border-[#333]" />
          <span className="absolute left-[15px] right-0 top-0 bottom-0 bg-white" />
          <span className="relative w-[34px] h-[30px] ml-[-4px] rounded-[7px] bg-[#e86a24] -rotate-12 text-white font-bold text-[27px] leading-[30px] text-center">S</span>
          <span className="relative ml-[6px] text-[#2a78c8] font-bold text-[19px]">中</span>
          <span className="relative ml-[8px] text-[#2a78c8] font-bold text-[17px]">°,</span>
          <svg className="relative ml-[8px]" width="22" height="22" viewBox="0 0 22 22" fill="none" stroke="#2a78c8" strokeWidth="2">
            <circle cx="11" cy="11" r="9" />
            <path d="M7 13C9 16 13 16 15 13M8 7v2M14 7v2" />
          </svg>
        </div>
      </footer>
    </div>
  );
}
